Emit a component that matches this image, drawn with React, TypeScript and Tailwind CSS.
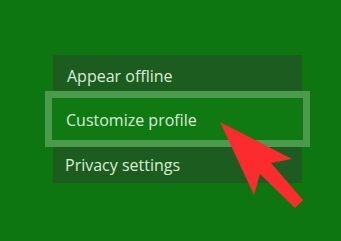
export default function App() {
  const font = { fontFamily: '"Open Sans", "Noto Sans", sans-serif' };
  return (
    <div className="relative h-[241px] w-[341px] overflow-hidden bg-[#0e7611]" style={font}>
      <div className="pl-[53px] pt-[55px]">
        <div className="w-[249px] bg-[#1d5c1f] text-[16px] text-[#d9eed9]">
          <div className="flex h-[36px] items-center pl-[14px] pt-[6px]">Appear offline</div>
          <div className="-mx-[8px] flex h-[56px] items-center border-[7px] border-[#4a9b4b] bg-[#107a12] pl-[14px] pt-[2px]">
            Customize profile
          </div>
          <div className="flex h-[36px] items-center pl-[12px]">Privacy settings</div>
        </div>
      </div>
      <svg className="absolute left-0 top-0" width="341" height="241" viewBox="0 0 341 241">
        <polygon
          points="220,122 292,159 271,163 303,200 295,208 260,174 254,195"
          fill="#fb2b2e"
        />
      </svg>
    </div>
  );
}
